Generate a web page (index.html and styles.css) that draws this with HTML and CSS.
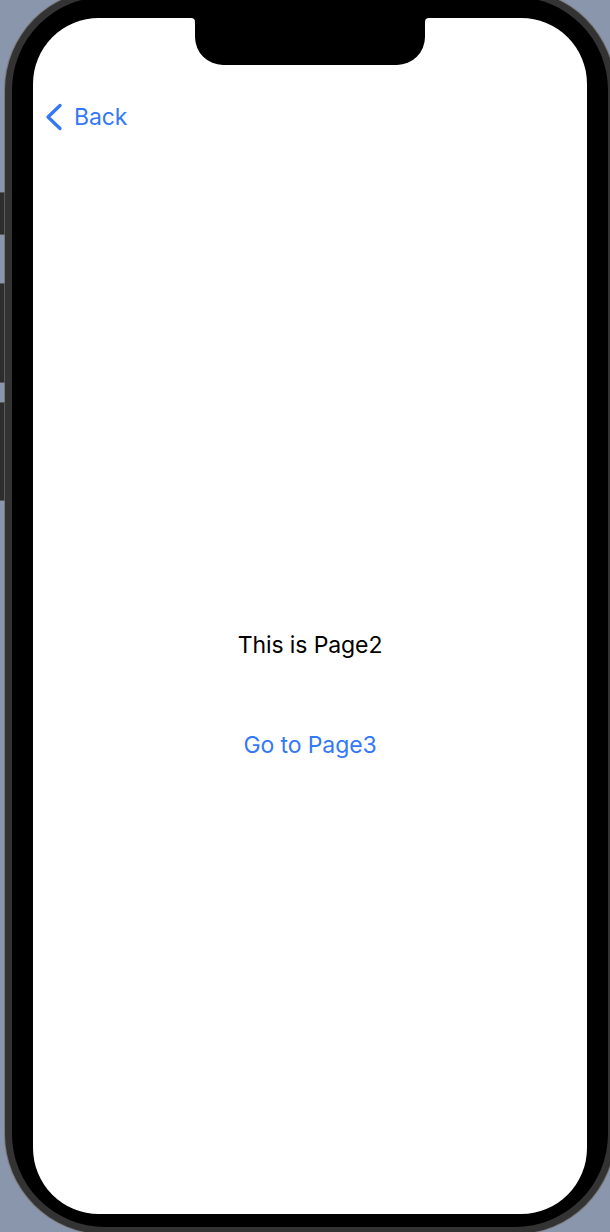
FILE: index.html
```html
<!DOCTYPE html>
<html>
<head>
<meta charset="utf-8">
<link rel="stylesheet" href="styles.css">
</head>
<body>
<div class="side-btn btn-silent"></div>
<div class="side-btn btn-vol-up"></div>
<div class="side-btn btn-vol-down"></div>
<div class="phone">
  <div class="bezel">
    <div class="screen">
      <svg class="notch" width="238" height="47" viewBox="0 0 238 47"><path d="M0 0 H238 Q234 0 234 4 V19 A28 28 0 0 1 206 47 H32 A28 28 0 0 1 4 19 V4 Q4 0 0 0 Z" fill="#000"/></svg>
      <nav class="navbar">
        <svg class="chevron" width="18" height="28" viewBox="0 0 18 28"><polyline points="15,2.5 3,14 15,25.5" fill="none" stroke="#3478f6" stroke-width="3.3" stroke-linecap="round" stroke-linejoin="round"/></svg>
        <span class="back-label">Back</span>
      </nav>
      <main class="content">
        <p class="title">This is Page2</p>
        <p class="link">Go to Page3</p>
      </main>
    </div>
  </div>
</div>
</body>
</html>
```
FILE: styles.css
```css
html, body {
  margin: 0;
  padding: 0;
}
body {
  background: #8996ab;
  height: 1232px;
  overflow: hidden;
  position: relative;
  font-family: Inter, "Liberation Sans", sans-serif;
}
.side-btn {
  position: absolute;
  left: 0;
  width: 4px;
  background: #2d2d2d;
  border: 1px solid #5a5a5a;
  border-left: none;
}
.btn-silent { top: 192px; height: 41px; }
.btn-vol-up { top: 283px; height: 98px; }
.btn-vol-down { top: 402px; height: 97px; }
.phone {
  box-sizing: border-box;
  margin: -10px 0 0 5px;
  width: 610px;
  height: 1244px;
  border-radius: 100px;
  background: #333;
  box-shadow: 0 0 0 1px #7a7a7a;
  padding: 7px;
}
.bezel {
  box-sizing: border-box;
  height: 100%;
  background: #000;
  border-radius: 93px;
  padding: 21px 21px 13px 21px;
}
.screen {
  position: relative;
  height: 100%;
  background: #fff;
  border-radius: 66px;
  overflow: hidden;
}
.notch {
  position: absolute;
  top: 0;
  left: 158px;
  display: block;
}
.navbar {
  display: flex;
  align-items: center;
  gap: 11px;
  padding: 85px 0 0 12px;
  height: 28px;
  color: #3478f6;
}
.chevron { display: block; }
.back-label {
  font-size: 23px;
  line-height: 28px;
  letter-spacing: -0.1px;
}
.content {
  display: flex;
  flex-direction: column;
  align-items: center;
  padding-top: 502px;
}
.content p {
  margin: 0;
  font-size: 23px;
  line-height: 24px;
  letter-spacing: -0.1px;
}
.title { color: #000; }
.link {
  color: #3478f6;
  margin-top: 76px !important;
}
```
